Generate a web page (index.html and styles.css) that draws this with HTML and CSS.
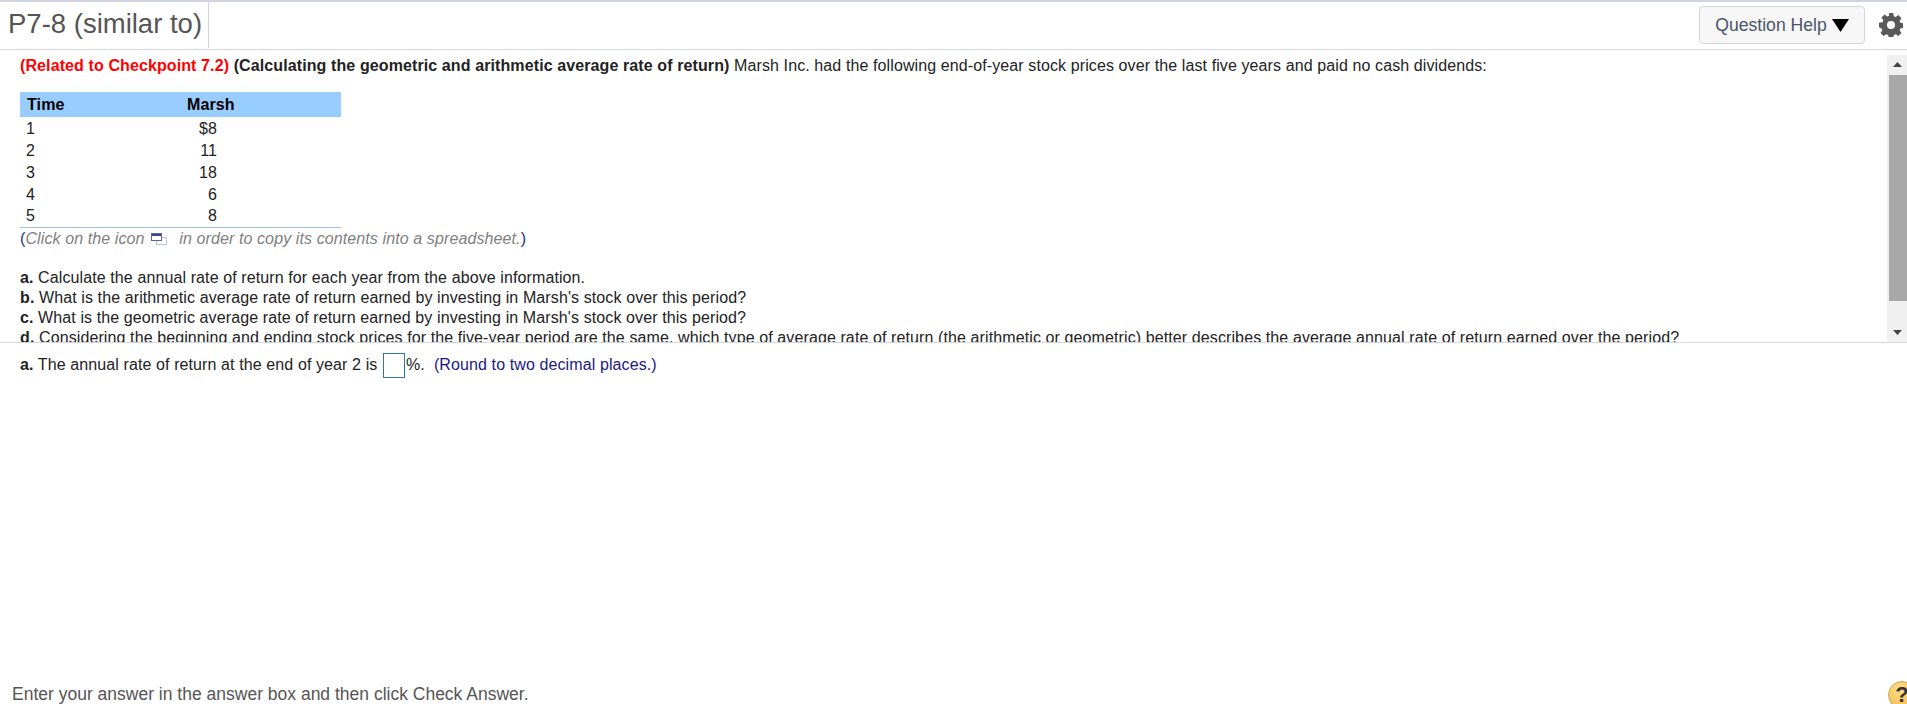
FILE: index.html
```html
<!DOCTYPE html>
<html lang="en">
<head>
<meta charset="utf-8">
<title>P7-8 (similar to)</title>
<link rel="stylesheet" href="styles.css">
</head>
<body>
<div class="page">
  <header class="top">
    <h1 class="title">P7-8 (similar to)</h1>
    <div class="tools">
      <button class="help-btn" type="button">Question Help <svg class="caret" viewBox="0 0 17 13" width="17" height="13"><path d="M0 0H17L8.500 13Z"/></svg></button>
      <svg class="gear" viewBox="0 0 24 24" width="24" height="24"><path fill="#595959" fill-rule="evenodd" d="M9.800 0h4.400l.6 3.200 1.900.8 2.700-1.900 3.100 3.100-1.900 2.700.8 1.900 3.400.6v4.400l-3.400.6-.8 1.900 1.900 2.700-3.100 3.100-2.700-1.900-1.900.8-.6 3.200H9.800l-.6-3.200-1.900-.8-2.700 1.900-3.100-3.100 1.900-2.700-.8-1.900L0 14.200V9.800l3.600-.6.8-1.900-1.900-2.700 3.100-3.100 2.700 1.900 1.900-.8zM12 8a4 4 0 1 0 0 8 4 4 0 0 0 0-8z"/></svg>
    </div>
  </header>
  <section class="question">
    <div class="q-text">
      <p class="intro"><b class="red">(Related to Checkpoint 7.2)</b> <b>(Calculating the geometric and arithmetic average rate of return)</b> Marsh Inc. had the following end-of-year stock prices over the last five years and paid no cash dividends:</p>
      <table class="data">
        <thead><tr><th class="c-time">Time</th><th class="c-marsh">Marsh</th></tr></thead>
        <tbody>
          <tr><td class="c-idx">1</td><td class="num">$8</td></tr>
          <tr><td class="c-idx">2</td><td class="num">11</td></tr>
          <tr><td class="c-idx">3</td><td class="num">18</td></tr>
          <tr><td class="c-idx">4</td><td class="num">6</td></tr>
          <tr><td class="c-idx">5</td><td class="num">8</td></tr>
        </tbody>
      </table>
      <p class="note"><span class="paren">(</span>Click on the icon <svg class="copy" viewBox="0 0 16 12" width="16" height="12"><rect x="5.500" y="4.500" width="10" height="7" fill="#fff" stroke="#b9bfe0"/><rect x="0.500" y="0.500" width="10" height="7" fill="#fff" stroke="#5a62a8"/><rect x="1" y="1" width="9" height="2" fill="#3d4590"/></svg> &nbsp;in order to copy its contents into a spreadsheet.<span class="paren">)</span></p>
      <div class="parts">
        <p><b>a.</b> Calculate the annual rate of return for each year from the above information.</p>
        <p><b>b.</b> What is the arithmetic average rate of return earned by investing in Marsh's stock over this period?</p>
        <p><b>c.</b> What is the geometric average rate of return earned by investing in Marsh's stock over this period?</p>
        <p><b>d.</b> Considering the beginning and ending stock prices for the five-year period are the same, which type of average rate of return (the arithmetic or geometric) better describes the average annual rate of return earned over the period?</p>
      </div>
    </div>
    <div class="scroll">
      <svg class="arrow" viewBox="0 0 9 5" width="9" height="5"><path d="M4.500 0L9 5H0Z"/></svg>
      <div class="thumb"></div>
      <svg class="arrow" viewBox="0 0 9 5" width="9" height="5"><path d="M0 0H9L4.500 5Z"/></svg>
    </div>
  </section>
  <section class="answer">
    <p class="answer-line"><b>a.</b> The annual rate of return at the end of year 2 is <input class="box" type="text" aria-label="answer">%. &nbsp;<span class="hint">(Round to two decimal places.)</span></p>
  </section>
  <footer class="foot">
    <span>Enter your answer in the answer box and then click Check Answer.</span>
    <div class="q-icon">?</div>
  </footer>
</div>
</body>
</html>
```
FILE: styles.css
```css
* { box-sizing: border-box; }
html, body { margin: 0; padding: 0; height: 704px; overflow: hidden; background: #fff; }
body { font-family: "Liberation Sans", Arial, sans-serif; font-size: 16px; color: #222; }
p { margin: 0; }
.page { display: flex; flex-direction: column; height: 704px; border-top: 2px solid #d0d4e2; }
.top { height: 48px; flex: none; display: flex; justify-content: space-between; align-items: stretch; border-bottom: 1px solid #d2d4de; }
.title { margin: 0 0 1px; width: 209px; padding-left: 8px; font-size: 27.500px; font-weight: 400; line-height: 44px; color: #555; border-right: 1px solid #d0d4e2; }
.tools { display: flex; align-items: center; gap: 14px; padding-right: 4px; margin-top: -1px; }
.help-btn { width: 166px; height: 38px; padding: 0; background: #f7f7f7; border: 1px solid #d5d5d5; border-radius: 4px; font: 17.600px "Liberation Sans", Arial, sans-serif; color: #4a5568; display: flex; align-items: center; justify-content: center; gap: 5px; }
.caret { fill: #000; }
.question { height: 293px; flex: none; display: flex; overflow: hidden; border-bottom: 1px solid #d2d4de; padding-top: 5px; }
.q-text { flex: 1; min-width: 0; padding: 1px 0 0 20px; overflow: hidden; letter-spacing: 0.105px; }
.intro { line-height: 20px; }
.red { color: #f00; }
.data { margin-top: 16px; width: 321px; border-collapse: collapse; table-layout: fixed; border-bottom: 1px solid #9cc3ef; }
.data th { height: 25px; padding: 0; background: #9cf; color: #000; font-weight: 700; text-align: left; }
.data th.c-time { width: 166px; padding-left: 7px; }
.data th.c-marsh { padding-left: 1px; }
.data td { height: 22px; padding: 1px 0 0; }
.data td.c-idx { padding-left: 6px; }
.data td.num { text-align: right; padding-right: 124px; }
.note { font-style: italic; color: #808080; line-height: 22px; }
.paren { color: #1a2f7a; font-style: normal; }
.copy { vertical-align: -1px; margin: 0 3px 0 2px; }
.parts { margin-top: 18px; }
.parts p { line-height: 20px; white-space: nowrap; }
.scroll { flex: none; width: 20px; background: #f0f0f0; display: flex; flex-direction: column; align-items: center; justify-content: space-between; margin-left: 6px; }
.scroll .arrow { fill: #444; margin: 7px 0; }
.thumb { flex: 1; width: 18px; align-self: flex-end; background: #a8a8a8; margin: 1px 0 22px; }
.answer { flex: 1; padding: 9px 0 0 20px; letter-spacing: 0.105px; }
.answer-line { line-height: 26px; display: flex; align-items: center; white-space: pre; }
.box { width: 22px; height: 25px; margin: 0 1px 0 1px; padding: 0; border: 1px solid #2b7a9b; background: #fff; }
.hint { color: #1a1a80; }
.foot { height: 36px; flex: none; position: relative; padding-left: 12px; color: #555; font-size: 17.500px; line-height: 52px; overflow: hidden; }
.q-icon { position: absolute; right: -9px; top: 13px; width: 28px; height: 28px; border-radius: 50%; background: radial-gradient(circle at 40% 30%, #ffe08a, #f2b544); border: 1px solid #c9a45a; font-weight: 700; font-size: 22px; line-height: 26px; text-align: center; color: #333; }
```
